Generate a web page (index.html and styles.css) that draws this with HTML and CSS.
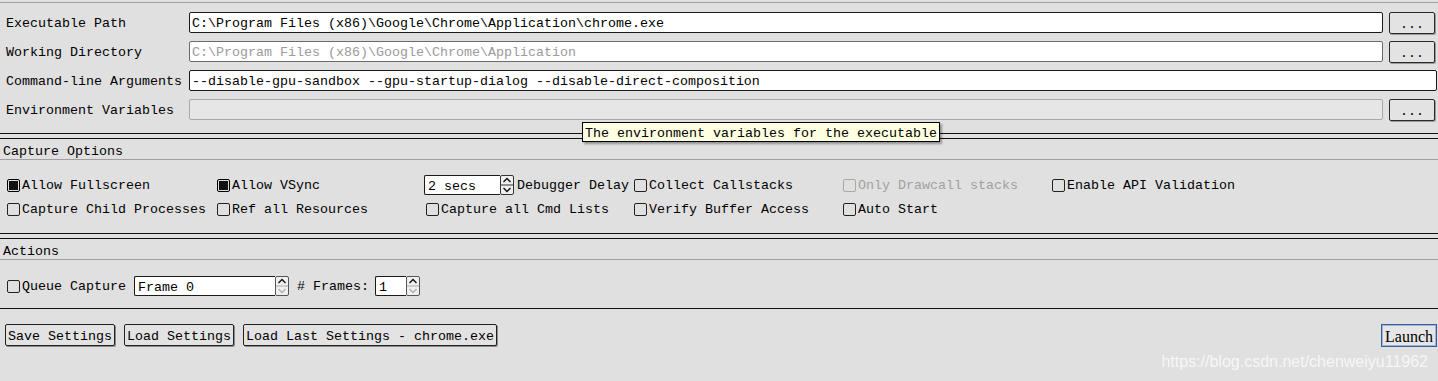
FILE: index.html
```html
<!DOCTYPE html>
<html>
<head>
<meta charset="utf-8">
<link rel="stylesheet" href="styles.css">
</head>
<body>
<div class="app">
  <div class="topline"></div>

  <div class="paths">
    <div class="prow">
      <span class="plabel">Executable Path</span>
      <div class="field">C:\Program Files (x86)\Google\Chrome\Application\chrome.exe</div>
      <button class="browse">...</button>
    </div>
    <div class="prow">
      <span class="plabel">Working Directory</span>
      <div class="field field-dim">C:\Program Files (x86)\Google\Chrome\Application</div>
      <button class="browse">...</button>
    </div>
    <div class="prow prow-wide">
      <span class="plabel">Command-line Arguments</span>
      <div class="field">--disable-gpu-sandbox --gpu-startup-dialog --disable-direct-composition</div>
    </div>
    <div class="prow">
      <span class="plabel">Environment Variables</span>
      <div class="field field-off"></div>
      <button class="browse">...</button>
    </div>
  </div>

  <div class="sep"></div>
  <div class="section-head">Capture Options</div>

  <div class="options">
    <label class="cb"><span class="box on"></span>Allow Fullscreen</label>
    <label class="cb"><span class="box on"></span>Allow VSync</label>
    <div class="spin-row">
      <div class="spin">
        <div class="spin-field w76">2 secs</div>
        <svg class="arrows" width="14" height="20" viewBox="0 0 14 20"><rect x="0.5" y="0.5" width="13" height="19" rx="1.5" fill="#f0f0f0" stroke="#333"/><line x1="1" y1="10" x2="13" y2="10" stroke="#333"/><polyline points="3.5,7 7,3.5 10.5,7" fill="none" stroke="#111" stroke-width="1.4"/><polyline points="3.5,13 7,16.5 10.5,13" fill="none" stroke="#111" stroke-width="1.4"/></svg>
      </div>
      <span class="spin-label">Debugger Delay</span>
    </div>
    <label class="cb"><span class="box"></span>Collect Callstacks</label>
    <label class="cb cb-off"><span class="box"></span>Only Drawcall stacks</label>
    <label class="cb"><span class="box"></span>Enable API Validation</label>

    <label class="cb"><span class="box"></span>Capture Child Processes</label>
    <label class="cb"><span class="box"></span>Ref all Resources</label>
    <label class="cb cb-in"><span class="box"></span>Capture all Cmd Lists</label>
    <label class="cb"><span class="box"></span>Verify Buffer Access</label>
    <label class="cb"><span class="box"></span>Auto Start</label>
    <span></span>
  </div>

  <div class="sep"></div>
  <div class="section-head">Actions</div>

  <div class="actions">
    <label class="cb"><span class="box"></span>Queue Capture</label>
    <div class="spin">
      <div class="spin-field w141">Frame 0</div>
      <svg class="arrows" width="14" height="20" viewBox="0 0 14 20"><rect x="0.5" y="0.5" width="13" height="19" rx="1.5" fill="#f0f0f0" stroke="#555"/><line x1="1" y1="10" x2="13" y2="10" stroke="#aaa"/><polyline points="3.5,7 7,3.5 10.5,7" fill="none" stroke="#111" stroke-width="1.4"/><polyline points="3.5,13 7,16.5 10.5,13" fill="none" stroke="#b0b0b0" stroke-width="1.4"/></svg>
    </div>
    <span class="frames-label"># Frames:</span>
    <div class="spin">
      <div class="spin-field w31">1</div>
      <svg class="arrows" width="14" height="20" viewBox="0 0 14 20"><rect x="0.5" y="0.5" width="13" height="19" rx="1.5" fill="#f0f0f0" stroke="#555"/><line x1="1" y1="10" x2="13" y2="10" stroke="#aaa"/><polyline points="3.5,7 7,3.5 10.5,7" fill="none" stroke="#111" stroke-width="1.4"/><polyline points="3.5,13 7,16.5 10.5,13" fill="none" stroke="#b0b0b0" stroke-width="1.4"/></svg>
    </div>
  </div>

  <div class="buttons">
    <div class="left-buttons">
      <button class="btn">Save Settings</button>
      <button class="btn">Load Settings</button>
      <button class="btn">Load Last Settings - chrome.exe</button>
    </div>
    <button class="launch">Launch</button>
  </div>

  <div class="watermark">https://blog.csdn.net/chenweiyu11962</div>
  <div class="tooltip">The environment variables for the executable</div>
</div>
</body>
</html>
```
FILE: styles.css
```css
* { box-sizing: border-box; }
html, body {
  margin: 0;
  padding: 0;
  background: #e0e0e0;
}
body {
  width: 1438px;
  height: 381px;
  overflow: hidden;
  font-family: "Liberation Mono", "Noto Sans CJK SC", monospace;
  font-size: 13.333px;
  line-height: 16px;
  color: #000;
}
.app {
  position: relative;
  height: 381px;
}
.topline {
  height: 3px;
  border-bottom: 1px solid #a0a0a0;
}

/* path rows */
.paths {
  padding: 9px 1px 0 0;
  display: grid;
  grid-auto-rows: 22px;
  row-gap: 7px;
}
.prow {
  display: flex;
  align-items: flex-start;
}
.plabel {
  width: 189px;
  padding: 4px 0 0 6px;
  flex: none;
  white-space: nowrap;
}
.field {
  flex: 1;
  height: 21px;
  background: #fff;
  border: 1px solid #1a1a1a;
  border-radius: 2px;
  padding: 3px 2px 0;
  white-space: nowrap;
  overflow: hidden;
}
.field-dim {
  color: #9a9a9a;
  border-color: #6a6a6a;
}
.field-off {
  background: #e6e6e6;
  border-color: #a8a8a8;
}
.browse {
  flex: none;
  width: 46px;
  height: 22px;
  margin: 0 2px 0 6px;
  font-family: inherit;
  font-size: 13.333px;
  line-height: 16px;
  padding: 4px 0 0;
  background: #e3e3e3;
  border: 1px solid #2a2a2a;
  border-radius: 2px;
  box-shadow: 1px 1px 0 #9a9a9a;
  color: #000;
}

/* separators */
.sep {
  margin-top: 12px;
  height: 6px;
  border-top: 1px solid #111;
  border-bottom: 1px solid #111;
}
.section-head {
  height: 21px;
  padding: 6px 0 0 3px;
  line-height: 14px;
  border-bottom: 1px solid #a0a0a0;
}

/* capture options */
.options {
  padding: 13px 0 0 7px;
  display: grid;
  grid-template-columns: 210px 207px 210px 209px 209px 1fr;
  grid-auto-rows: 24px;
  align-items: center;
}
.cb {
  display: flex;
  align-items: center;
  white-space: nowrap;
  padding-top: 1px;
}
.box {
  width: 13px;
  height: 13px;
  margin-right: 2px;
  border: 1px solid #222;
  border-radius: 2px;
  flex: none;
  position: relative;
}
.box.on {
  border-color: #000;
}
.box.on::after {
  content: "";
  position: absolute;
  left: 1px;
  top: 1px;
  right: 1px;
  bottom: 1px;
  background: #111;
}
.cb-off { color: #a0a0a0; }
.cb-off .box { border-color: #a8a8a8; }
.cb-in { padding-left: 2px; }

.spin-row {
  display: flex;
  align-items: center;
}
.spin {
  display: flex;
  align-items: center;
  flex: none;
}
.spin-field {
  height: 20px;
  background: #fff;
  border: 1px solid #1a1a1a;
  border-right: none;
  border-radius: 2px 0 0 2px;
  padding: 3px 3px 0;
  white-space: nowrap;
}
.arrows { display: block; flex: none; }
.w76 { width: 76px; }
.w141 { width: 141px; }
.w31 { width: 31px; }
.spin-label { margin-left: 3px; padding-top: 2px; white-space: nowrap; }

/* actions */
.actions {
  margin-top: 15px;
  padding-left: 7px;
  height: 21px;
  display: flex;
  align-items: center;
}
.actions .cb { margin-right: 8px; padding-top: 2px; }
.frames-label { margin: 0 6px 0 8px; padding-top: 3px; white-space: nowrap; }

.buttons {
  margin-top: 12px;
  border-top: 1px solid #111;
  padding: 15px 1px 0 5px;
  display: flex;
  justify-content: space-between;
  align-items: flex-start;
}
.left-buttons {
  display: flex;
  gap: 9px;
}
.btn {
  height: 22px;
  padding: 4px 2px 0;
  font-family: inherit;
  font-size: 13.333px;
  line-height: 16px;
  color: #000;
  background: #e3e3e3;
  border: 1px solid #222;
  border-radius: 2px;
  box-shadow: 1px 1px 0 #8a8a8a;
  white-space: nowrap;
}
.launch {
  width: 56px;
  height: 23px;
  padding: 1px 0 0;
  font-family: "Liberation Serif", serif;
  font-size: 16px;
  line-height: 19px;
  color: #000;
  background: #e6e6e6;
  border: 1px solid #3d5c98;
  box-shadow: inset 0 0 0 1px #9fb3d6;
}

.watermark {
  position: absolute;
  right: 10px;
  top: 352px;
  font-family: "Liberation Sans", Arial, sans-serif;
  font-size: 16px;
  line-height: 20px;
  color: rgba(255, 255, 255, 0.75);
  white-space: nowrap;
}
.tooltip {
  position: absolute;
  left: 582px;
  top: 122px;
  width: 358px;
  height: 20px;
  padding: 3px 2px 0;
  line-height: 15px;
  background: #ffffe1;
  border: 1px solid #000;
  box-shadow: 2px 2px 2px rgba(0, 0, 0, 0.35);
  white-space: nowrap;
}
```
